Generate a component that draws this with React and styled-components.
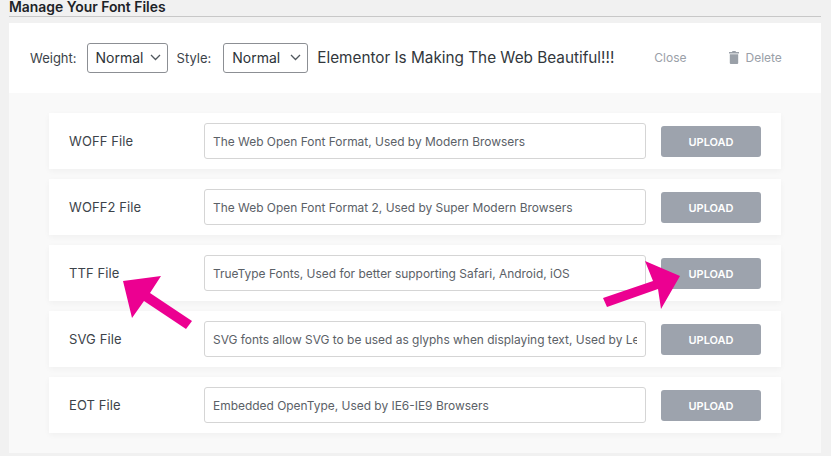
import React from "react";
import styled, { createGlobalStyle } from "styled-components";

const FONT_ROWS = [
  { label: "WOFF File", hint: "The Web Open Font Format, Used by Modern Browsers" },
  { label: "WOFF2 File", hint: "The Web Open Font Format 2, Used by Super Modern Browsers" },
  { label: "TTF File", hint: "TrueType Fonts, Used for better supporting Safari, Android, iOS" },
  { label: "SVG File", hint: "SVG fonts allow SVG to be used as glyphs when displaying text, Used by Legacy iOS" },
  { label: "EOT File", hint: "Embedded OpenType, Used by IE6-IE9 Browsers" },
];

function Chevron() {
  return (
    <svg width="11" height="7" viewBox="0 0 11 7" fill="none">
      <path d="M1 1l4.5 4.5L10 1" stroke="#50575e" strokeWidth="1.3" />
    </svg>
  );
}

function Trash() {
  return (
    <svg width="10" height="13" viewBox="0 0 10 13" fill="#9aa0a8">
      <path d="M3.5 0h3l.5 1h3v1.4H0V1h3z" />
      <path d="M.8 3.2h8.4V12a1 1 0 0 1-1 1H1.8a1 1 0 0 1-1-1z" />
    </svg>
  );
}

function App() {
  return (
    <Page>
      <GlobalStyle />
      <Heading>Manage Your Font Files</Heading>
      <Toolbar>
        <FieldLabel $gap={10}>Weight:</FieldLabel>
        <Select $width={81}>
          Normal
          <Chevron />
        </Select>
        <FieldLabel $gap={12}>Style:</FieldLabel>
        <Select $width={85}>
          Normal
          <Chevron />
        </Select>
        <Preview>Elementor Is Making The Web Beautiful!!!</Preview>
        <ToolLink $left={40}>Close</ToolLink>
        <ToolLink $left={43}>
          <Trash />
          Delete
        </ToolLink>
      </Toolbar>
      <FilesArea>
        {FONT_ROWS.map((row) => (
          <FileCard key={row.label}>
            <FileLabel>{row.label}</FileLabel>
            <HintInput>
              <HintText>{row.hint}</HintText>
            </HintInput>
            <UploadButton>UPLOAD</UploadButton>
          </FileCard>
        ))}
      </FilesArea>
      <Arrow viewBox="0 0 831 456">
        <polygon points="123,281 161,276 150,293 192,321 186,329 144,301 132,318" />
      </Arrow>
      <Arrow viewBox="0 0 831 456">
        <polygon points="680,276 645,261 653,281 603,298 607,307 658,289 661,309" />
      </Arrow>
    </Page>
  );
}

const GlobalStyle = createGlobalStyle`
  html, body {
    margin: 0;
    padding: 0;
    background: #f1f1f1;
  }
`;

const Page = styled.div`
  position: relative;
  width: 831px;
  height: 456px;
  overflow: hidden;
  padding: 0 10px 0 9px;
  box-sizing: border-box;
  font-family: Inter, "Liberation Sans", sans-serif;
  color: #3c434a;
`;

const Heading = styled.div`
  height: 16px;
  border-bottom: 1px solid #c8c8c8;
  font-size: 13.9px;
  font-weight: 600;
  line-height: 15px;
  color: #1d2327;
  margin-bottom: 6px;
`;

const Toolbar = styled.div`
  display: flex;
  align-items: center;
  height: 70px;
  box-sizing: border-box;
  padding: 0 0 1px 21px;
  background: #fff;
`;

const FieldLabel = styled.span`
  font-size: 13px;
  color: #3c434a;
  margin-right: ${(props) => props.$gap}px;
`;

const Select = styled.div`
  display: flex;
  align-items: center;
  justify-content: space-between;
  box-sizing: border-box;
  width: ${(props) => props.$width}px;
  height: 30px;
  padding: 0 6px 0 8px;
  margin-right: 9px;
  border: 1px solid #8c8f94;
  border-radius: 3px;
  background: #fff;
  font-size: 14px;
  color: #2c3338;
`;

const Preview = styled.span`
  font-size: 15.3px;
  color: #32373c;
  white-space: nowrap;
`;

const ToolLink = styled.span`
  display: flex;
  align-items: center;
  gap: 6px;
  margin-left: ${(props) => props.$left}px;
  font-size: 12px;
  color: #9aa0a8;
`;

const FilesArea = styled.div`
  display: flex;
  flex-direction: column;
  gap: 10px;
  height: 360px;
  box-sizing: border-box;
  padding: 20px 40px;
  background: #f9f9f9;
`;

const FileCard = styled.div`
  display: flex;
  align-items: center;
  height: 56px;
  padding: 0 20px;
  background: #fff;
  box-shadow: 0 2px 6px rgba(0, 0, 0, 0.04);
`;

const FileLabel = styled.span`
  flex: 0 0 135px;
  font-size: 13px;
  font-weight: 400;
  letter-spacing: 0.1px;
  color: #3c434a;
`;

const HintInput = styled.div`
  flex: 0 0 442px;
  min-width: 0;
  box-sizing: border-box;
  height: 36px;
  display: flex;
  align-items: center;
  padding: 0 8px;
  border: 1px solid #d5d5d5;
  border-radius: 3px;
  background: #fff;
`;

const HintText = styled.span`
  flex: 1;
  min-width: 0;
  overflow: hidden;
  font-size: 11.95px;
  color: #5b6167;
  white-space: nowrap;
`;

const UploadButton = styled.div`
  flex: 0 0 100px;
  height: 31px;
  margin-left: 15px;
  border-radius: 3px;
  background: #9da3ad;
  color: #fff;
  font-size: 11px;
  font-weight: 600;
  line-height: 32px;
  text-align: center;
`;

const Arrow = styled.svg`
  position: absolute;
  left: 0;
  top: 0;
  width: 831px;
  height: 456px;
  fill: #ec0091;
  pointer-events: none;
`;

export default App;
